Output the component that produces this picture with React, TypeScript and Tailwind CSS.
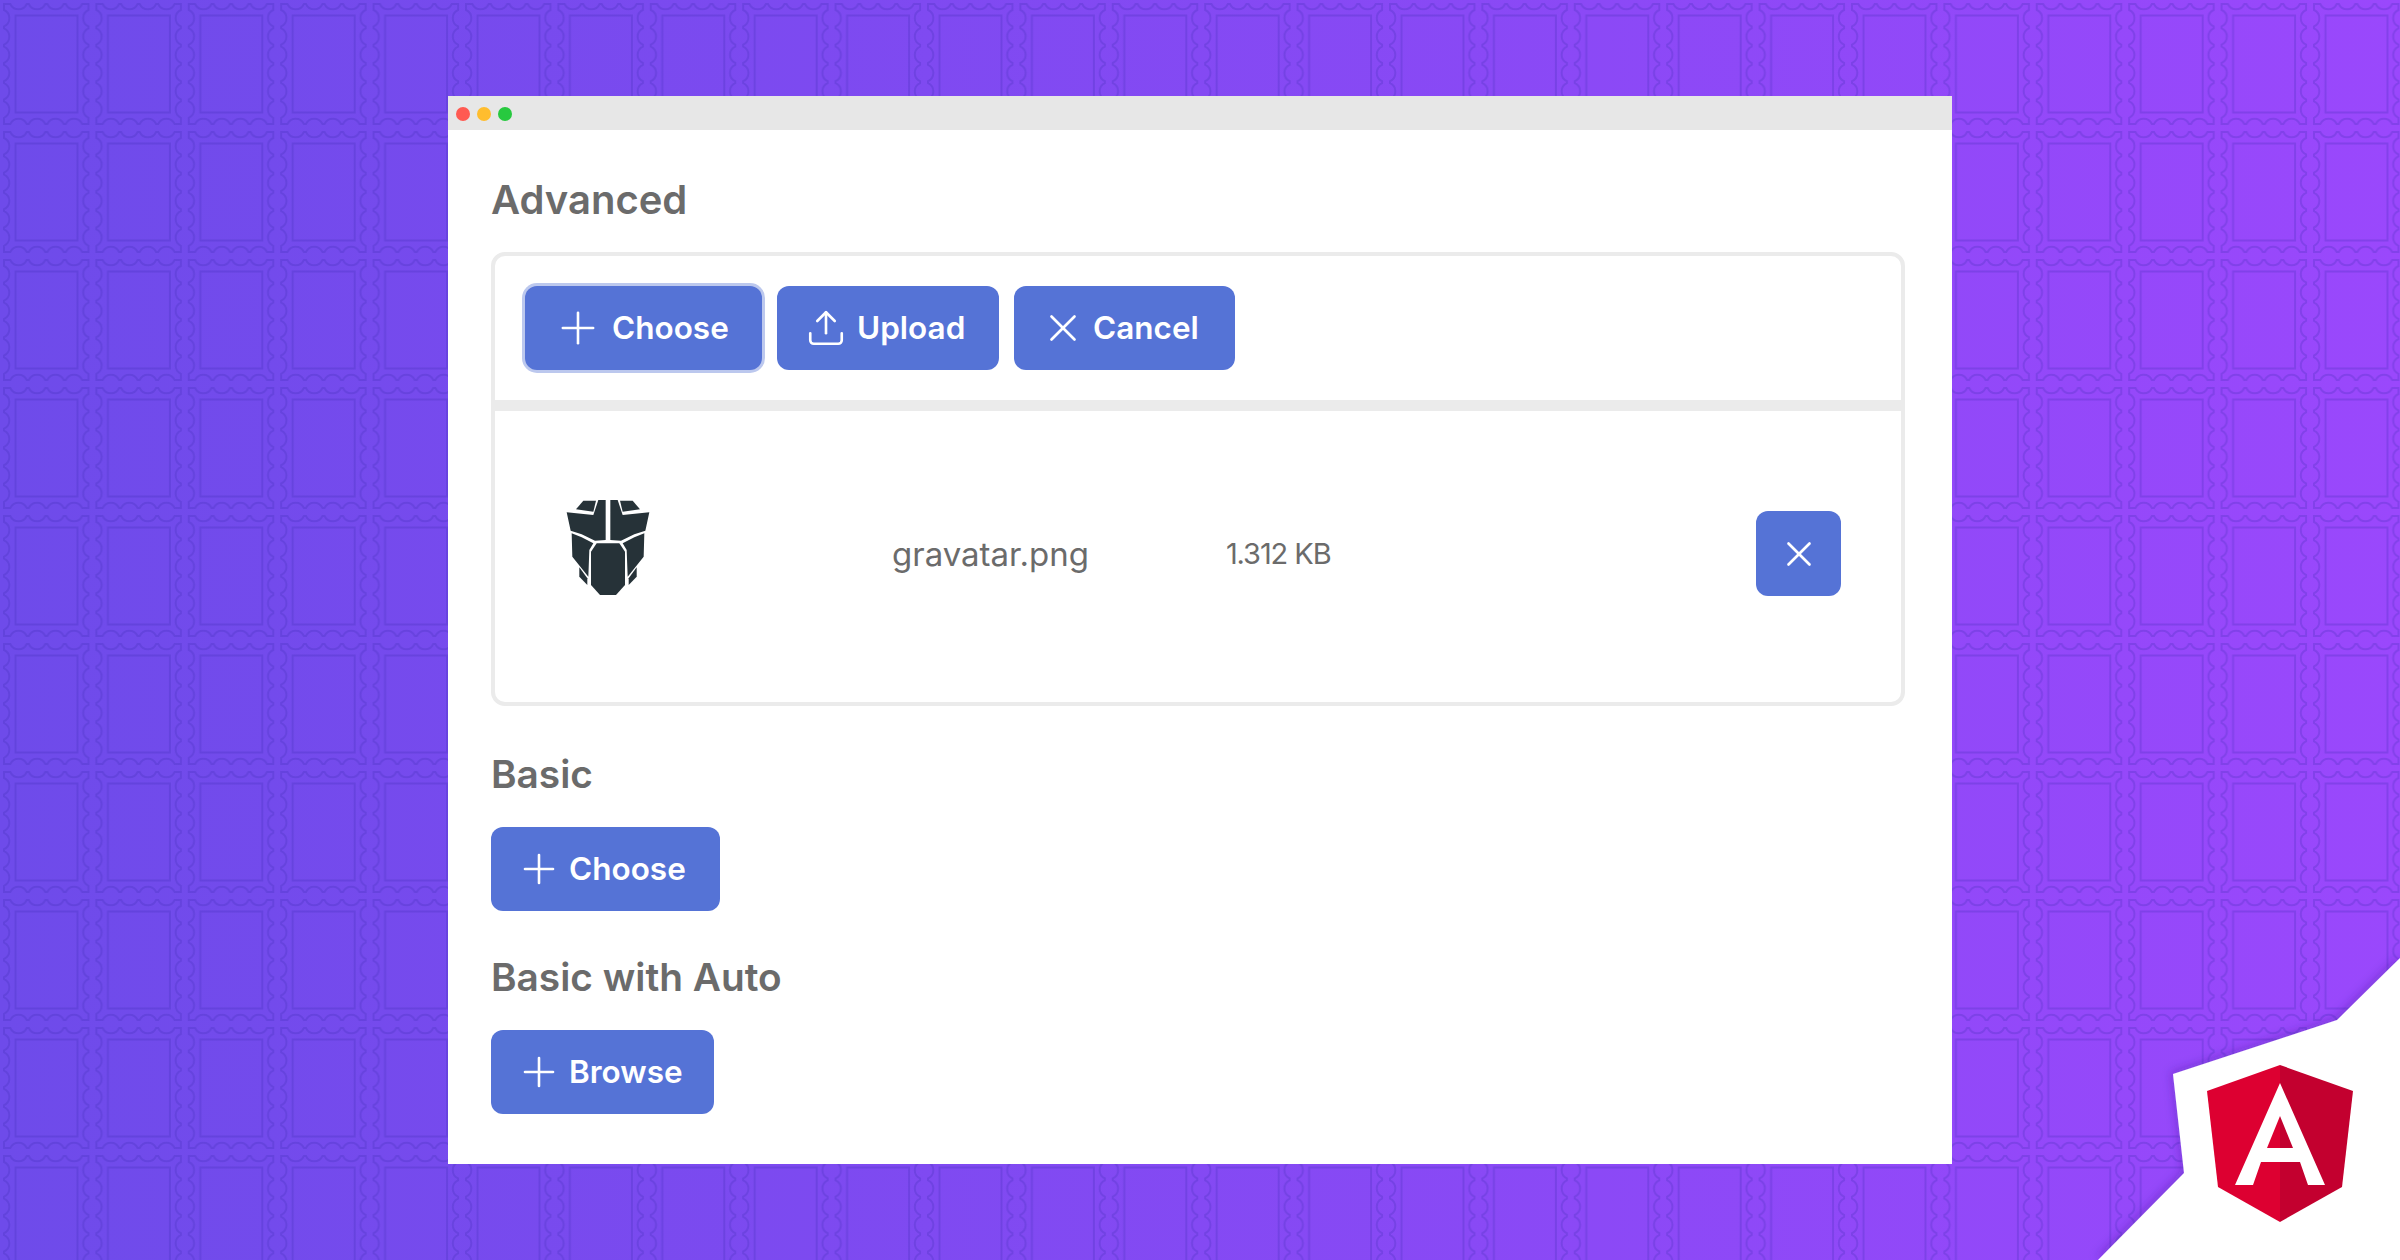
import { Plus, Upload, X } from 'lucide-react';
import type { ReactNode } from 'react';

const font = "font-['Inter','Noto_Sans',sans-serif]";

// one stamp: perforated outline + inner frame, repeated over the backdrop
const Backdrop = () => {
  const xs = [18.5, 37, 55.5, 74];
  const ys = [18.2, 36.5, 54.8, 73, 91.3, 109.6];
  const top = xs.map((x) => `L${x - 8.2} 4 a9 9 0 0 0 16.4 0`).join(' ');
  const right = ys.map((y) => `L88.5 ${y - 8.2} a9 9 0 0 0 0 16.4`).join(' ');
  const bottom = [...xs].reverse().map((x) => `L${x + 8.2} 124 a9 9 0 0 0 -16.4 0`).join(' ');
  const left = [...ys].reverse().map((y) => `L4 ${y + 8.2} a9 9 0 0 0 0 -16.4`).join(' ');
  const outline = `M4 4 ${top} L88.5 4 ${right} L88.5 124 ${bottom} L4 124 ${left} Z`;

  return (
    <svg className="absolute inset-0" width="2400" height="1260">
      <defs>
        <linearGradient id="bg" x1="0" y1="0" x2="1" y2="0">
          <stop offset="0" stopColor="#6e4bea" />
          <stop offset="1" stopColor="#9a48fc" />
        </linearGradient>
        <pattern id="stamp" width="92.4" height="128" patternUnits="userSpaceOnUse">
          <path d={outline} fill="none" stroke="#3a2ab0" strokeOpacity="0.24" strokeWidth="2" />
          <rect x="15.5" y="15.5" width="62" height="97" fill="none" stroke="#3a2ab0" strokeOpacity="0.24" strokeWidth="2" />
        </pattern>
      </defs>
      <rect width="2400" height="1260" fill="url(#bg)" />
      <rect width="2400" height="1260" fill="url(#stamp)" />
    </svg>
  );
};

const AngularBadge = () => (
  <svg className="absolute inset-0" width="2400" height="1260">
    <defs>
      <filter id="soft" x="-20%" y="-20%" width="140%" height="140%">
        <feDropShadow dx="-2" dy="-2" stdDeviation="5" floodColor="#3a1a90" floodOpacity="0.3" />
      </filter>
    </defs>
    <polygon points="2400,958 2337,1020 2173,1074 2184,1173 2098,1260 2400,1260" fill="#ffffff" filter="url(#soft)" />
    <polygon points="2280,1065 2207,1091 2218,1187 2280,1222" fill="#dd0031" />
    <polygon points="2280,1065 2353,1091 2342,1187 2280,1222" fill="#c3002f" />
    <path
      fillRule="evenodd"
      d="M2280 1083 L2235 1185 L2253 1185 L2261 1162 L2300 1162 L2308 1185 L2325 1185 Z M2280 1116 L2267 1148 L2293 1148 Z"
      fill="#ffffff"
    />
  </svg>
);

const Mask = () => (
  <svg width="84" height="100" viewBox="78 51 252 300">
    <g fill="#263238">
      <polygon points="130,62 168,62 160,95 108,88" />
      <polygon points="240,62 278,62 300,88 248,95" />
      <polygon points="80,97 160,105 175,60 197,60 197,180 165,182 125,163 92,152" />
      <polygon points="328,97 248,105 233,60 211,60 211,180 243,182 283,163 316,152" />
      <polygon points="95,160 125,172 160,190 148,210 145,290 97,230" />
      <polygon points="313,160 283,172 248,190 260,210 263,290 311,230" />
      <polygon points="118,262 142,295 142,315 118,290" />
      <polygon points="290,262 266,295 266,315 290,290" />
      <polygon points="170,190 238,190 255,215 255,315 228,345 180,345 153,315 153,215" />
    </g>
  </svg>
);

const Button = ({ icon, label, className }: { icon: ReactNode; label: string; className: string }) => (
  <button className={`flex items-center h-[84px] bg-[#5573d6] rounded-[12px] text-white text-[31.5px] font-semibold ${className}`}>
    {icon}
    <span>{label}</span>
  </button>
);

const Heading = ({ children, className }: { children: ReactNode; className: string }) => (
  <h2 className={`text-[#6b6b6b] leading-[48px] font-semibold ${className}`}>{children}</h2>
);

const App = () => {
  return (
    <div className={`relative w-[2400px] h-[1260px] overflow-hidden ${font}`}>
      <Backdrop />

      <div className="relative flex justify-center pt-[96px]">
        <div className="w-[1504px] h-[1068px] bg-white flex flex-col">
          <div className="h-[34px] bg-[#e7e7e7] flex items-center gap-[7px] pl-[8px] pt-[1px]">
            <span className="w-[14px] h-[14px] rounded-full bg-[#ff5a52]" />
            <span className="w-[14px] h-[14px] rounded-full bg-[#ffbd2e]" />
            <span className="w-[14px] h-[14px] rounded-full bg-[#27c93f]" />
          </div>

          <div className="flex flex-col px-[43px]">
            <Heading className="mt-[46px] text-[40px]">Advanced</Heading>

            <div className="mt-[28px] w-[1414px] h-[454px] border-[4px] border-[#ebebeb] rounded-[14px] flex flex-col">
              <div className="h-[144px] flex items-center gap-[15px] pl-[30px] border-b-[11px] border-[#ebebeb] box-content">
                <Button
                  icon={<Plus size={52} strokeWidth={1.2} className="mr-[8px]" />}
                  label="Choose"
                  className="w-[237px] pl-[27px] ring-[3px] ring-[#bcc8ee]"
                />
                <Button
                  icon={<Upload size={42} strokeWidth={1.5} className="mr-[10px]" />}
                  label="Upload"
                  className="w-[222px] pl-[28px]"
                />
                <Button
                  icon={<X size={46} strokeWidth={1.4} className="mr-[7px]" />}
                  label="Cancel"
                  className="w-[221px] pl-[26px]"
                />
              </div>

              <div className="flex-1 flex items-start pt-[86px] pl-[71px]">
                <Mask />
                <span className="ml-[242px] mt-[35px] text-[33px] leading-[44px] text-[#6b6b6b]">gravatar.png</span>
                <span className="ml-[137px] mt-[35px] text-[29px] leading-[44px] tracking-[-1.1px] text-[#6b6b6b]">1.312 KB</span>
                <button className="ml-auto mr-[60px] mt-[14px] w-[85px] h-[85px] flex items-center justify-center bg-[#5573d6] rounded-[12px] text-white">
                  <X size={42} strokeWidth={1.5} />
                </button>
              </div>
            </div>

            <Heading className="mt-[44px] text-[38.8px]">Basic</Heading>
            <Button
              icon={<Plus size={48} strokeWidth={1.3} className="mr-[6px]" />}
              label="Choose"
              className="mt-[29px] w-[229px] pl-[24px]"
            />

            <Heading className="mt-[42px] text-[38.8px]">Basic with Auto</Heading>
            <Button
              icon={<Plus size={48} strokeWidth={1.3} className="mr-[6px]" />}
              label="Browse"
              className="mt-[29px] w-[223px] pl-[24px]"
            />
          </div>
        </div>
      </div>

      <AngularBadge />
    </div>
  );
};

export default App;
